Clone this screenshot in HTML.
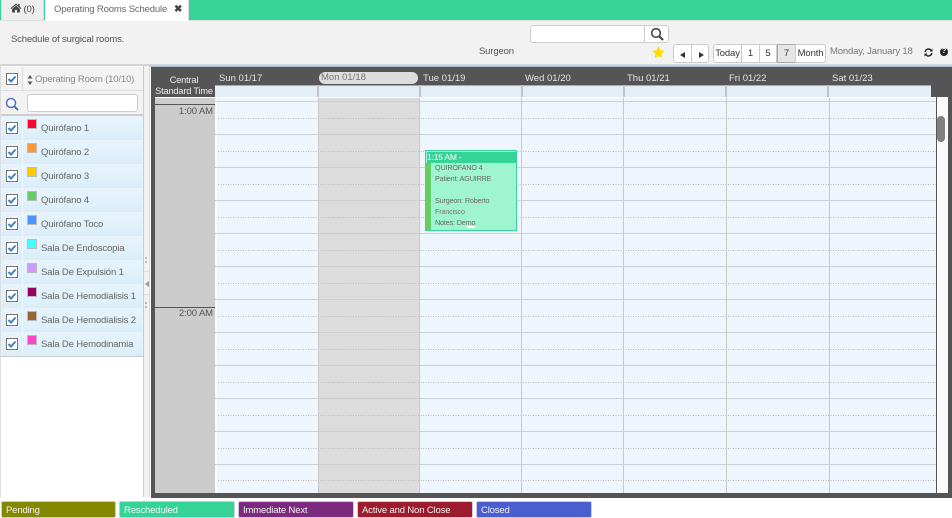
<!DOCTYPE html>
<html><head><meta charset="utf-8">
<style>
html,body{margin:0;padding:0;width:952px;height:518px;overflow:hidden;background:#fff}
body{position:relative;font-family:"Liberation Sans",sans-serif;font-size:9.5px;color:#555;letter-spacing:-.15px}
.a,.a *{box-sizing:border-box}
.a{position:absolute;white-space:nowrap}
.btn{background:#fff;border:1px solid #ccc;text-align:center;color:#333;line-height:17px;height:19px;top:44px}
.row{left:1px;width:142px;height:24px;background:linear-gradient(#e8f4fc,#daeef9);}
.cb{left:6px;width:12px;height:12px;border:1px solid #777;background:#fff}
.sw{left:27px;width:10px;height:10px;border:1px solid #bbb}
.lbl{left:41px;color:#666;line-height:12px}
.leg{top:501px;height:17px;border-radius:2px;color:#f4f4f4;line-height:17px;padding-left:4px;border:1px solid #ccd}
.vl{top:98px;width:1px;height:395px;background:#c8c8c8}
.hl{left:215px;width:721px;height:1px;background:#cdd0d2}
.dl{left:218px;width:718px;height:1px;background:repeating-linear-gradient(90deg,#bbb 0,#bbb 1px,transparent 1px,transparent 2.5px)}
.dh{top:73px;color:#e4e4e4;font-size:9.5px;line-height:11px;letter-spacing:0}
.hs{top:85px;width:2px;height:12px;background:#c4c4c4}
</style></head><body>
<div class="a" style="left:0;top:0;width:952px;height:20px;background:#36d399"></div>
<div class="a" style="left:0;top:20px;width:952px;height:2px;background:#ddd"></div>
<div class="a" style="left:1px;top:0;width:43px;height:21px;background:#eee;border:1px solid #ddd;border-top:0;line-height:20px;padding-left:8px;color:#444">
<svg width="12" height="10" viewBox="0 0 13 11" style="vertical-align:-1px;margin-right:-1px"><path d="M6.5 0.5L0.5 5.8l.7.8L6.5 2l5.3 4.6.7-.8-2-1.800V1H9v1.700zM2.200 6.600V10.500H5.300V7.500H7.700V10.500H10.800V6.600L6.500 2.900z" fill="#444"/></svg> (0)</div>
<div class="a" style="left:45px;top:0;width:144px;height:21px;background:#fff;border-right:1px solid #ddd;line-height:20px;padding-left:9px;color:#666">Operating Rooms Schedule<span style="position:absolute;left:129px;top:0;color:#444;font-weight:bold;font-size:10px">✖</span></div>
<div class="a" style="left:0;top:21px;width:952px;height:43px;background:#f2f2f2"></div>
<div class="a" style="left:0;top:64px;width:952px;height:2px;background:#d4d4d4"></div>
<div class="a" style="left:11px;top:34px;line-height:12px;color:#555">Schedule of surgical rooms.</div>
<div class="a" style="left:479px;top:46px;line-height:12px;color:#555">Surgeon</div>
<div class="a" style="left:530px;top:25px;width:115px;height:18px;background:#fff;border:1px solid #ccc;border-radius:3px 0 0 3px"></div>
<div class="a" style="left:644px;top:25px;width:25px;height:18px;background:#fff;border:1px solid #ccc;border-radius:0 3px 3px 0">
<svg width="15" height="15" viewBox="0 0 15 15" style="position:absolute;left:5px;top:1px"><circle cx="6" cy="6" r="4.300" fill="none" stroke="#444" stroke-width="1.600"/><path d="M9 9l4 4" stroke="#444" stroke-width="2.200"/></svg></div>
<svg class="a" style="left:652px;top:46px" width="13" height="13" viewBox="0 0 13 13"><path d="M6.500 .3l1.900 4 4.300.6-3.100 3 .8 4.300-3.900-2.100-3.900 2.100.8-4.300-3.100-3 4.300-.6z" fill="#fd0"/></svg>
<div class="a btn" style="left:673px;width:19px;border-radius:3px 0 0 3px"><svg width="5" height="6" style="position:absolute;left:6px;top:7px"><path d="M5 0v6L0 3z" fill="#333"/></svg></div>
<div class="a btn" style="left:691px;width:18px;border-radius:0 3px 3px 0"><svg width="5" height="6" style="position:absolute;left:7px;top:7px"><path d="M0 0v6l5-3z" fill="#333"/></svg></div>
<div class="a btn" style="left:713px;width:29px;border-radius:3px 0 0 3px">Today</div>
<div class="a btn" style="left:741px;width:19px">1</div>
<div class="a btn" style="left:759px;width:18px">5</div>
<div class="a btn" style="left:777px;width:19px;background:#e6e6e6;border-color:#aaa">7</div>
<div class="a btn" style="left:795px;width:31px;border-radius:0 3px 3px 0">Month</div>
<div class="a" style="left:830px;top:46px;line-height:12px;color:#777">Monday, January 18</div>
<svg class="a" style="left:924px;top:48px" width="9" height="9" viewBox="0 0 9 9"><path d="M1.200 4A3.300 3.300 0 0 1 7 2.200M7.800 5A3.300 3.300 0 0 1 2 6.800" fill="none" stroke="#222" stroke-width="1.400"/><path d="M8.500 .5v3h-3zM.5 8.500v-3h3z" fill="#222"/></svg>
<div class="a" style="left:940px;top:48px;width:8px;height:8px;border-radius:50%;background:#222;color:#fff;font-size:7px;font-weight:bold;line-height:8px;text-align:center;letter-spacing:0">?</div>

<!-- left panel -->
<div class="a" style="left:0;top:66px;width:144px;height:431px;background:#fff;border-right:1px solid #ccc;border-left:1px solid #ddd"></div>
<div class="a" style="left:1px;top:67px;width:142px;height:24px;background:#f3f3f3;border-bottom:1px solid #ddd"></div>
<div class="a" style="left:22px;top:67px;width:1px;height:48px;background:#ddd"></div>
<div class="a cb" style="top:73px"><svg width="10" height="10" style="position:absolute;left:0;top:0"><path d="M1.500 5l2.500 2.500L8.500 2.500" fill="none" stroke="#3b82c4" stroke-width="2"/></svg></div>
<svg class="a" style="left:27px;top:75px" width="6" height="10"><path d="M3 0l2.500 3.500h-5zM3 10l2.500-3.500h-5z" fill="#555"/></svg>
<div class="a" style="left:35px;top:74px;line-height:12px;color:#888">Operating Room (10/10)</div>
<div class="a" style="left:1px;top:91px;width:142px;height:25px;background:#f3f3f3;border-bottom:2px solid #ccc"></div>
<svg class="a" style="left:5px;top:97px" width="14" height="14" viewBox="0 0 14 14"><circle cx="6" cy="6" r="4.500" fill="#fff" stroke="#4a70c8" stroke-width="1.500"/><path d="M9.500 9.500l3.500 3.500" stroke="#4a70c8" stroke-width="2"/></svg>
<div class="a" style="left:27px;top:94px;width:111px;height:18px;background:#fff;border:1px solid #ccc;border-radius:3px"></div>

<div class="a row" style="top:116px"></div><div class="a cb" style="top:122px"><svg width="10" height="10" style="position:absolute"><path d="M1.500 5l2.500 2.500L8.500 2.500" fill="none" stroke="#3b82c4" stroke-width="2"/></svg></div><div class="a sw" style="top:119px;background:#f03"></div><div class="a lbl" style="top:123px">Quirófano 1</div>
<div class="a row" style="top:140px"></div><div class="a cb" style="top:146px"><svg width="10" height="10" style="position:absolute"><path d="M1.500 5l2.500 2.500L8.500 2.500" fill="none" stroke="#3b82c4" stroke-width="2"/></svg></div><div class="a sw" style="top:143px;background:#f93"></div><div class="a lbl" style="top:147px">Quirófano 2</div>
<div class="a row" style="top:164px"></div><div class="a cb" style="top:170px"><svg width="10" height="10" style="position:absolute"><path d="M1.500 5l2.500 2.500L8.500 2.500" fill="none" stroke="#3b82c4" stroke-width="2"/></svg></div><div class="a sw" style="top:167px;background:#fc0"></div><div class="a lbl" style="top:171px">Quirófano 3</div>
<div class="a row" style="top:188px"></div><div class="a cb" style="top:194px"><svg width="10" height="10" style="position:absolute"><path d="M1.500 5l2.500 2.500L8.500 2.500" fill="none" stroke="#3b82c4" stroke-width="2"/></svg></div><div class="a sw" style="top:191px;background:#6c6"></div><div class="a lbl" style="top:195px">Quirófano 4</div>
<div class="a row" style="top:212px"></div><div class="a cb" style="top:218px"><svg width="10" height="10" style="position:absolute"><path d="M1.500 5l2.500 2.500L8.500 2.500" fill="none" stroke="#3b82c4" stroke-width="2"/></svg></div><div class="a sw" style="top:215px;background:#4d94ff"></div><div class="a lbl" style="top:219px">Quirófano Toco</div>
<div class="a row" style="top:236px"></div><div class="a cb" style="top:242px"><svg width="10" height="10" style="position:absolute"><path d="M1.500 5l2.500 2.500L8.500 2.500" fill="none" stroke="#3b82c4" stroke-width="2"/></svg></div><div class="a sw" style="top:239px;background:#4ff"></div><div class="a lbl" style="top:243px">Sala De Endoscopia</div>
<div class="a row" style="top:260px"></div><div class="a cb" style="top:266px"><svg width="10" height="10" style="position:absolute"><path d="M1.500 5l2.500 2.500L8.500 2.500" fill="none" stroke="#3b82c4" stroke-width="2"/></svg></div><div class="a sw" style="top:263px;background:#c9f"></div><div class="a lbl" style="top:267px">Sala De Expulsión 1</div>
<div class="a row" style="top:284px"></div><div class="a cb" style="top:290px"><svg width="10" height="10" style="position:absolute"><path d="M1.500 5l2.500 2.500L8.500 2.500" fill="none" stroke="#3b82c4" stroke-width="2"/></svg></div><div class="a sw" style="top:287px;background:#906"></div><div class="a lbl" style="top:291px">Sala De Hemodialisis 1</div>
<div class="a row" style="top:308px"></div><div class="a cb" style="top:314px"><svg width="10" height="10" style="position:absolute"><path d="M1.500 5l2.500 2.500L8.500 2.500" fill="none" stroke="#3b82c4" stroke-width="2"/></svg></div><div class="a sw" style="top:311px;background:#963"></div><div class="a lbl" style="top:315px">Sala De Hemodialisis 2</div>
<div class="a row" style="top:332px"></div><div class="a cb" style="top:338px"><svg width="10" height="10" style="position:absolute"><path d="M1.500 5l2.500 2.500L8.500 2.500" fill="none" stroke="#3b82c4" stroke-width="2"/></svg></div><div class="a sw" style="top:335px;background:#f4c"></div><div class="a lbl" style="top:339px">Sala De Hemodinamia</div>
<div class="a" style="left:1px;top:356px;width:142px;height:1px;background:#ccc"></div>
<div class="a" style="left:22px;top:116px;width:1px;height:240px;background:#eef6fb"></div>

<!-- splitter -->
<div class="a" style="left:144px;top:66px;width:6px;height:431px;background:#f2f2f2;border-right:1px solid #ddd"></div>
<div class="a" style="left:144px;top:271px;width:6px;height:24px;border-top:1px solid #ddd;border-bottom:1px solid #ddd"></div>
<svg class="a" style="left:145px;top:281px" width="4" height="6"><path d="M4 0v6L0 3z" fill="#999"/></svg>
<div class="a" style="left:145px;top:257px;width:1px;height:6px;border-left:2px dotted #bbb"></div>
<div class="a" style="left:145px;top:302px;width:1px;height:6px;border-left:2px dotted #bbb"></div>

<!-- calendar -->
<div class="a" style="left:150px;top:66px;width:802px;height:1px;background:#9db8d2"></div>
<div class="a" style="left:151px;top:67px;width:801px;height:431px;background:#555"></div>
<div class="a" style="left:154px;top:75px;width:60px;text-align:center;color:#eee;font-size:9.2px;line-height:10.5px;letter-spacing:-.15px">Central<br>Standard Time</div>
<div class="a dh" style="left:219px">Sun 01/17</div>
<div class="a" style="left:319px;top:72px;width:99px;height:12px;border-radius:6px;background:#ddd;color:#777;font-size:9.5px;line-height:12px;padding-left:2px;letter-spacing:0">Mon 01/18</div>
<div class="a dh" style="left:423px">Tue 01/19</div>
<div class="a dh" style="left:525px">Wed 01/20</div>
<div class="a dh" style="left:627px">Thu 01/21</div>
<div class="a dh" style="left:729px">Fri 01/22</div>
<div class="a dh" style="left:832px">Sat 01/23</div>
<div class="a" style="left:215px;top:85px;width:716px;height:12px;background:#e3eef5;border-top:1px solid #8fb0d0"></div>
<div class="a" style="left:215px;top:97px;width:721px;height:396px;background:#eef5fc"></div>
<div class="a" style="left:155px;top:97px;width:60px;height:396px;background:#ccc"></div>
<div class="a" style="left:155px;top:97px;width:60px;height:1px;background:#fff"></div>
<div class="a" style="left:215px;top:97px;width:2px;height:396px;background:#fff;opacity:.6"></div>
<div class="a" style="left:155px;top:104px;width:60px;height:1px;background:#555"></div>
<div class="a" style="left:155px;top:307px;width:60px;height:1px;background:#555"></div>
<div class="a" style="left:155px;top:106px;width:58px;text-align:right;line-height:11px;color:#555;letter-spacing:-.1px">1:00 AM</div>
<div class="a" style="left:155px;top:308px;width:58px;text-align:right;line-height:11px;color:#555;letter-spacing:-.1px">2:00 AM</div>
<div class="a" style="left:318px;top:98px;width:102px;height:395px;background:#dcdcdc"></div>
<div class="a" style="left:215px;top:97px;width:721px;height:1px;background:#fff"></div>

<div class="a hl" style="top:101px"></div><div class="a hl" style="top:134px"></div><div class="a hl" style="top:167px"></div><div class="a hl" style="top:200px"></div><div class="a hl" style="top:233px"></div><div class="a hl" style="top:266px"></div><div class="a hl" style="top:299px"></div><div class="a hl" style="top:332px"></div><div class="a hl" style="top:365px"></div><div class="a hl" style="top:398px"></div><div class="a hl" style="top:431px"></div><div class="a hl" style="top:464px"></div>
<div class="a dl" style="top:118px"></div><div class="a dl" style="top:151px"></div><div class="a dl" style="top:184px"></div><div class="a dl" style="top:217px"></div><div class="a dl" style="top:250px"></div><div class="a dl" style="top:283px"></div><div class="a dl" style="top:316px"></div><div class="a dl" style="top:349px"></div><div class="a dl" style="top:382px"></div><div class="a dl" style="top:415px"></div><div class="a dl" style="top:448px"></div><div class="a dl" style="top:480px"></div>

<div class="a vl" style="left:318px"></div><div class="a vl" style="left:419px"></div><div class="a vl" style="left:521px"></div><div class="a vl" style="left:623px"></div><div class="a vl" style="left:726px"></div><div class="a vl" style="left:829px"></div>
<div class="a hs" style="left:317px"></div><div class="a hs" style="left:419px"></div><div class="a hs" style="left:521px"></div><div class="a hs" style="left:623px"></div><div class="a hs" style="left:725px"></div><div class="a hs" style="left:827px"></div>

<div class="a" style="left:936px;top:97px;width:1px;height:396px;background:#555"></div>
<div class="a" style="left:937px;top:97px;width:11px;height:396px;background:#f9f9f9"></div>
<div class="a" style="left:937px;top:116px;width:8px;height:26px;border-radius:4px;background:#808080"></div>

<!-- event -->
<div class="a" style="left:425px;top:150px;width:92px;height:81px;background:#9ff5cf;border:1px solid #36d399;overflow:hidden">
<div class="a" style="left:1px;top:1px;width:89px;height:11px;background:#36d399;color:#fff;font-size:8.5px;line-height:11px;letter-spacing:-.2px">1:15 AM -</div>
<div class="a" style="left:0;top:12px;width:5px;height:68px;background:#6c6"></div>
<div class="a" style="left:9px;top:11px;font-size:7.2px;line-height:11px;color:#666;letter-spacing:-.15px">QUIRÓFANO 4<br>Patient: AGUIRRE<br><br>Surgeon: Roberto<br><span style="color:#777">Francisco</span><br>Notes: Demo</div>
<div class="a" style="left:41px;top:75px;width:8px;height:2px;background:#fff"></div>
</div>

<!-- legend -->
<div class="a" style="left:0;top:498px;width:952px;height:20px;background:#fff"></div>
<div class="a leg" style="left:1px;width:115px;background:#848800">Pending</div>
<div class="a leg" style="left:119px;width:116px;background:#36d399">Rescheduled</div>
<div class="a leg" style="left:238px;width:116px;background:#7b2a7e">Immediate Next</div>
<div class="a leg" style="left:357px;width:116px;background:#9c1c2e">Active and Non Close</div>
<div class="a leg" style="left:476px;width:116px;background:#4a5ed0">Closed</div>
</body></html>
